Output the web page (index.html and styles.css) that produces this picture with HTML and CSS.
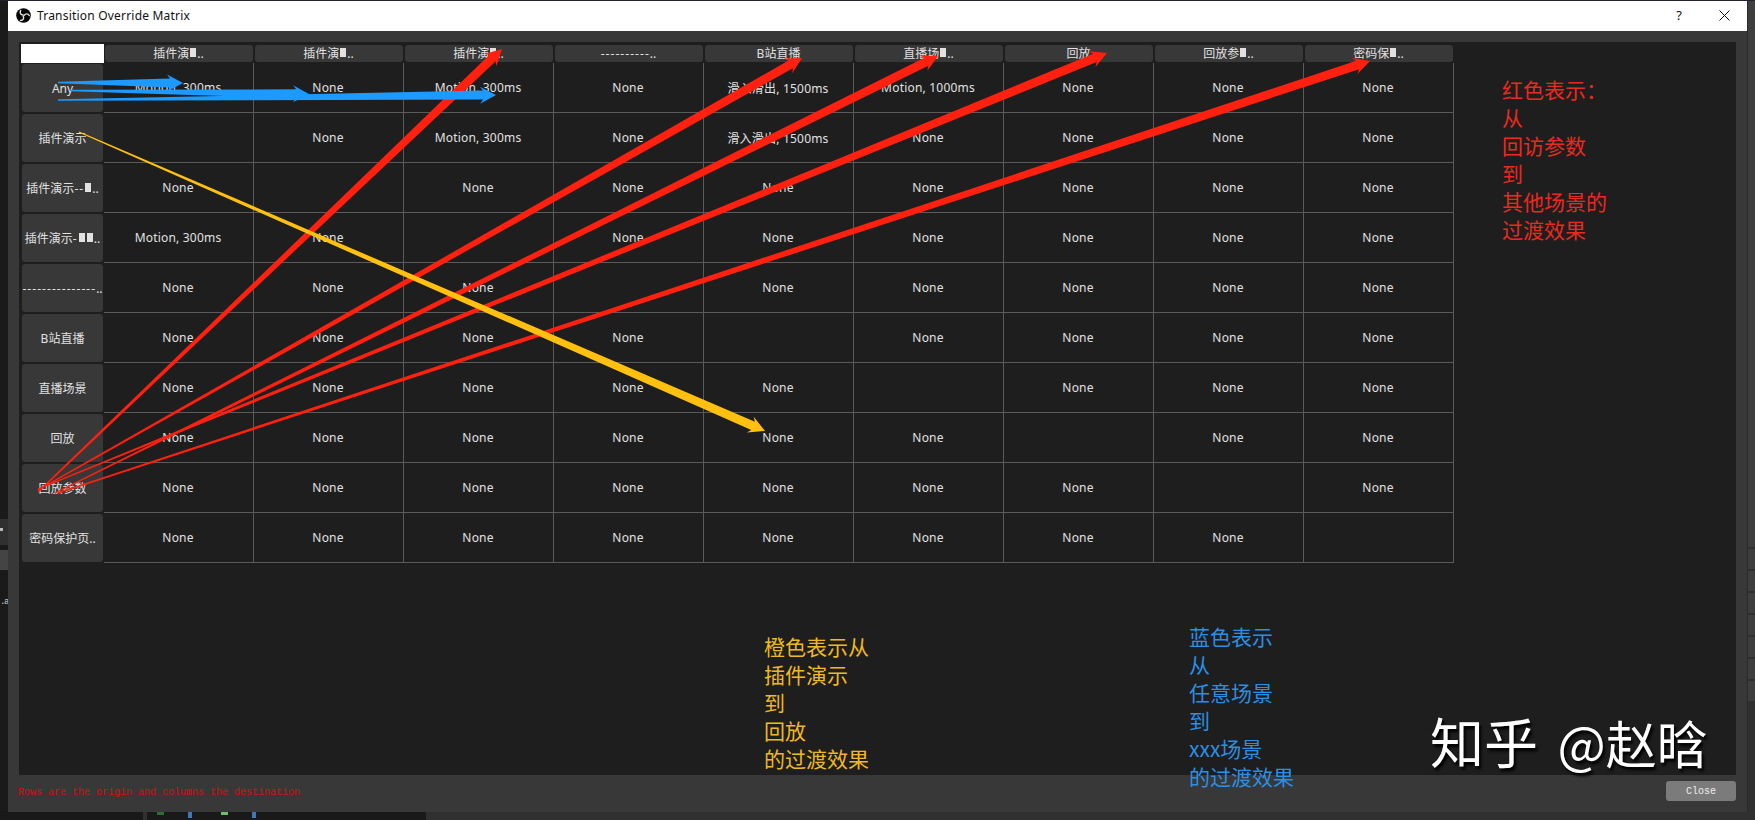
FILE: index.html
```html
<!DOCTYPE html>
<html lang="zh-CN">
<head>
  <meta charset="UTF-8" />
  <title>Transition Override Matrix</title>
  <link rel="stylesheet" href="styles.css">
</head>
<body>
  <div class="desktop">
    <div class="left-strip">
      <div class="strip-box arrow"></div>
      <div class="strip-box light"></div>
      <div class="strip-text">.a</div>
    </div>

    <div class="dialog">
      <div class="titlebar">
        <svg class="logo" viewBox="0 0 16 16">
          <circle cx="8" cy="8" r="7.8" fill="#050505"/>
          <g fill="none" stroke="#e4e4e4" stroke-width="1.5" stroke-linecap="round">
            <path d="M5 2.6C3.6 5.2 5 7.2 7.6 7.4"/>
            <path d="M5 2.6C3.6 5.2 5 7.2 7.6 7.4" transform="rotate(120 8 8)"/>
            <path d="M5 2.6C3.6 5.2 5 7.2 7.6 7.4" transform="rotate(240 8 8)"/>
          </g>
        </svg>
        <span class="title">Transition Override Matrix</span>
        <span class="help">?</span>
        <svg class="close-x" viewBox="0 0 11 11"><path d="M.5.5l10 10M10.5.5l-10 10" stroke="#111" fill="none"/></svg>
      </div>

      <div class="panel">
        <div class="matrix" id="matrix"></div>
      </div>

      <div class="footer">
        <span class="hint">Rows are the origin and columns the destination</span>
        <button class="close-btn">Close</button>
      </div>
    </div>

    <div class="right-strip">
      <div class="block tall"></div>
      <div class="block"></div><div class="block"></div><div class="block"></div>
      <div class="block"></div><div class="block"></div><div class="block"></div>
      <div class="block"></div>
    </div>

    <div class="bottom-strip">
      <div class="dock small"></div>
      <div class="dock meters">
        <i class="g dim"></i><i class="b"></i><i class="g"></i><i class="b"></i>
      </div>
    </div>

    <svg class="arrows" id="arrows" viewBox="0 0 1755 820"></svg>

    <div class="note note-red">红色表示：<br>从<br>回访参数<br>到<br>其他场景的<br>过渡效果</div>
    <div class="note note-orange">橙色表示从<br>插件演示<br>到<br>回放<br>的过渡效果</div>
    <div class="note note-blue">蓝色表示<br>从<br>任意场景<br>到<br>xxx场景<br>的过渡效果</div>
    <div class="watermark"><span class="brand">知乎</span> @赵晗</div>
  </div>

  <script>
    // "#" stands for a masked character
    const columns = ["插件演#..", "插件演#..", "插件演#..", "----------..", "B站直播", "直播场#..", "回放", "回放参#..", "密码保#.."];
    const rows = ["Any", "插件演示", "插件演示--#..", "插件演示-##..", "---------------..", "B站直播", "直播场景", "回放", "回放参数", "密码保护页.."];
    const overrides = {
      "0,0": "Motion, 300ms", "0,2": "Motion, 300ms", "0,4": "滑入滑出, 1500ms", "0,5": "Motion, 1000ms",
      "1,2": "Motion, 300ms", "1,4": "滑入滑出, 1500ms", "3,0": "Motion, 300ms"
    };

    const matrix = document.getElementById('matrix');

    function add(cls, text) {
      const div = document.createElement('div');
      div.className = cls;
      div.innerHTML = text
        .replace(/-+/g, '<span class="dashes">$&</span>')
        .replace(/#/g, '<span class="mask"></span>');
      matrix.appendChild(div);
    }

    add('corner', '');
    columns.forEach(name => add('head col', name));
    rows.forEach((name, r) => {
      add('head row', name);
      columns.forEach((_, c) => {
        add('cell', r - 1 === c ? '' : overrides[r + ',' + c] || 'None');
      });
    });

    // tail x, tail y, tip x, tip y, colour
    const arrows = [
      [38, 492, 502, 49, 'red'],
      [38, 490, 802, 58, 'red'],
      [55, 493, 938, 56, 'red'],
      [38, 489, 1107, 53, 'red'],
      [58, 493, 1370, 61, 'red'],
      [79, 132, 765, 431, 'orange'],
      [58, 82.5, 183, 83, 'blue'],
      [70, 90.5, 309, 94, 'blue'],
      [58, 100, 496, 95, 'blue']
    ];

    function arrowPoints(x1, y1, x2, y2) {
      const len = Math.hypot(x2 - x1, y2 - y1);
      const ux = (x2 - x1) / len, uy = (y2 - y1) / len;
      const at = (d, s) => (x1 + ux * d - uy * s).toFixed(1) + ',' + (y1 + uy * d + ux * s).toFixed(1);
      return [at(0, -.7), at(len - 13, -4.5), at(len - 16, -8.5), at(len, 0), at(len - 16, 8.5), at(len - 13, 4.5), at(0, .7)].join(' ');
    }

    document.getElementById('arrows').innerHTML = arrows
      .map(a => `<polygon class="${a[4]}" points="${arrowPoints(a[0], a[1], a[2], a[3])}"/>`).join('');
  </script>
</body>
</html>
```
FILE: styles.css
```css
body {
  margin: 0;
  background: #303030;
  font-family: "Noto Sans", "Noto Sans CJK SC", sans-serif;
}

.desktop {
  position: relative;
  width: 1755px;
  height: 820px;
  display: grid;
  grid-template-columns: 8px 1739px 8px;
  grid-template-rows: 811px 8px;
  padding-top: 1px;
  box-sizing: border-box;
  background: #303030;
  overflow: hidden;
  box-shadow: inset 0 1px #22242c;
}

.left-strip {
  background: #1a1a1a;
  padding-top: 518px;
}

.strip-box {
  height: 26px;
  background: #303030;
  margin-bottom: 5px;
}

.strip-box.arrow::before {
  content: "";
  display: block;
  width: 3px;
  height: 3px;
  border-top: 9px solid transparent;
  background: #bbb content-box;
}

.strip-box.light {
  height: 20px;
  background: #444;
}

.strip-text {
  margin-top: 26px;
  font: 9px/12px "Liberation Mono", monospace;
  letter-spacing: -1.5px;
  color: #ccc;
}

.dialog {
  display: flex;
  flex-direction: column;
  background: #383838;
}

.titlebar {
  height: 30px;
  display: flex;
  align-items: center;
  background: #fff;
  color: #111;
  padding: 0 17px 0 8px;
  box-sizing: border-box;
}

.logo {
  width: 15px;
  height: 15px;
  margin-right: 6px;
  margin-bottom: 1px;
}

.title {
  flex: 1;
  font-size: 12px;
  line-height: 18px;
  letter-spacing: .2px;
  margin-bottom: 1px;
}

.help {
  font-size: 13px;
  margin-right: 37px;
  margin-bottom: 2px;
}

.close-x {
  width: 11px;
  height: 11px;
  margin-bottom: 1px;
}

.panel {
  height: 733px;
  margin: 11px 11px 0;
  padding: 2px;
  box-sizing: border-box;
  background: #1e1e1e;
}

.matrix {
  display: grid;
  grid-template-columns: 83px repeat(9, 150px);
  grid-template-rows: 19px repeat(10, 50px);
  color: #e1e1e1;
  font-size: 12px;
}

.corner {
  background: #fff;
}

.head {
  display: flex;
  align-items: center;
  justify-content: center;
  margin: 1px;
  background: #383838;
  border-radius: 3px;
  white-space: nowrap;
  overflow: hidden;
  line-height: 16px;
}

.head.col {
  padding-right: 1px;
}

.head.row {
  padding-top: 1px;
}

.dashes {
  letter-spacing: 1.05px;
}

.mask {
  width: 6px;
  height: 9px;
  margin: 0 1px 2px 1px;
  background: #e1e1e1;
}

.cell {
  display: flex;
  align-items: center;
  justify-content: center;
  border-right: 1px solid #5a5a5a;
  border-bottom: 1px solid #5a5a5a;
  padding-right: 1px;
  letter-spacing: .2px;
}

.footer {
  flex: 1;
  display: flex;
  justify-content: space-between;
  align-items: flex-start;
  padding: 6px 11px 0 10px;
  font-family: "Liberation Mono", monospace;
}

.hint {
  color: #d80c10;
  font-size: 10px;
  line-height: 20px;
  margin-top: 2px;
}

.close-btn {
  width: 70px;
  height: 20px;
  border: none;
  border-radius: 3px;
  background: #7b7b7b;
  color: #eee;
  font: 10px "Liberation Mono", monospace;
}

.right-strip {
  background: #303030;
  border-left: 1px solid #2a2a2a;
}

.block {
  height: 20px;
  margin-bottom: 2px;
  background: #3e3e3e;
}

.block.tall {
  height: 546px;
}

.bottom-strip {
  grid-column: 1 / 4;
  display: flex;
  gap: 4px;
}

.dock {
  background: #191919;
}

.dock.small {
  width: 143px;
}

.dock.meters {
  width: 279px;
  display: flex;
  align-items: flex-start;
  padding-left: 10px;
  box-sizing: border-box;
}

.meters .g {
  width: 7px;
  height: 3px;
  background: #6fbf6f;
  margin-right: 24px;
}

.meters .g.dim {
  background: #2f6b35;
}

.meters .b {
  width: 4px;
  height: 6px;
  background: #3f78b5;
  margin-right: 29px;
}

.arrows {
  position: absolute;
  left: 0;
  top: 0;
  width: 1755px;
  height: 820px;
}

.red { fill: #ff200f; }
.orange { fill: #ffc010; }
.blue { fill: #1c9aff; }

.note {
  position: absolute;
  font-family: "Noto Sans CJK SC", sans-serif;
  font-size: 21px;
  line-height: 28px;
  white-space: nowrap;
}

.note-red {
  left: 1502px;
  top: 75px;
  color: #ea2920;
}

.note-orange {
  left: 764px;
  top: 632px;
  color: #f0b822;
}

.note-blue {
  left: 1189px;
  top: 622px;
  color: #2b8fe4;
}

.watermark {
  position: absolute;
  left: 1430px;
  top: 703px;
  font-family: "Noto Sans CJK SC", sans-serif;
  font-size: 51px;
  line-height: 76px;
  word-spacing: 8px;
  color: #fff;
  text-shadow: 2px 3px 3px #000;
  white-space: nowrap;
}

.brand {
  font-size: 54px;
}
```
